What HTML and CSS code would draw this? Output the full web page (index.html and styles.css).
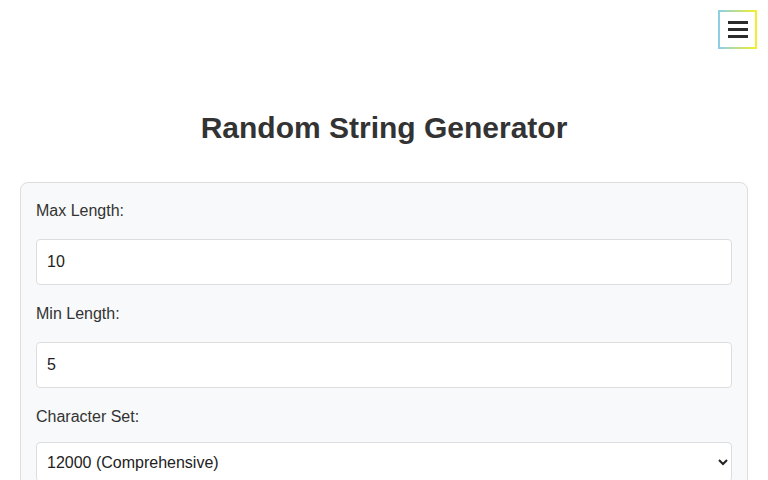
FILE: index.html
```html
<!DOCTYPE html>
<html lang="en">
<head>
<meta charset="utf-8">
<title>Random String Generator</title>
<link rel="stylesheet" href="styles.css">
</head>
<body>
<header class="topbar">
  <button class="menu-btn" aria-label="Menu">
    <svg width="20" height="19" viewBox="0 0 20 19"><rect x="0" y="1" width="20" height="3" fill="#2b2b2b"/><rect x="0" y="8" width="20" height="3" fill="#2b2b2b"/><rect x="0" y="15" width="20" height="3" fill="#2b2b2b"/></svg>
  </button>
</header>
<main class="container">
  <h1 class="title">Random String Generator</h1>
  <section class="card">
    <label class="field-label" for="max">Max Length:</label>
    <input class="field-input" id="max" type="text" value="10">
    <label class="field-label" for="min">Min Length:</label>
    <input class="field-input" id="min" type="text" value="5">
    <label class="field-label field-label--select" for="set">Character Set:</label>
    <select class="field-select" id="set">
      <option>12000 (Comprehensive)</option>
    </select>
  </section>
</main>
</body>
</html>
```

FILE: styles.css
```css
* { box-sizing: border-box; }
html, body { margin: 0; padding: 0; }
body {
  font-family: "Liberation Sans", Arial, sans-serif;
  color: #333;
  background: #fff;
}
.topbar {
  display: flex;
  justify-content: flex-end;
  padding: 10px 11px 0 0;
}
.menu-btn {
  width: 39px;
  height: 39px;
  padding: 0;
  background: #fff;
  border: 2px solid;
  border-image: linear-gradient(to right, #8ccfe6, #f3ef2a) 1;
  display: flex;
  align-items: center;
  justify-content: center;
}
.menu-btn svg { display: block; }
.container {
  padding: 0 20px;
}
.title {
  margin: 61px 0 37px;
  text-align: center;
  font-size: 30px;
  line-height: 35px;
  font-weight: bold;
  color: #333;
}
.card {
  background: #f8f9fa;
  border: 1px solid #ddd;
  border-radius: 8px;
  padding: 19px 15px 20px;
}
.field-label {
  display: block;
  font-size: 16px;
  line-height: 18px;
  margin-bottom: 19px;
  color: #333;
}
.field-label--select {
  margin-bottom: 16px;
}
.field-input {
  display: block;
  width: 100%;
  height: 46px;
  padding: 0 10px;
  font-family: inherit;
  font-size: 16px;
  color: #222;
  background: #fff;
  border: 1px solid #ddd;
  border-radius: 4px;
  margin-bottom: 20px;
}
.field-select {
  display: block;
  width: 100%;
  height: 40px;
  padding: 0 6px;
  font-family: inherit;
  font-size: 16px;
  color: #222;
  background: #fff;
  border: 1px solid #ddd;
  border-radius: 4px;
}
```
